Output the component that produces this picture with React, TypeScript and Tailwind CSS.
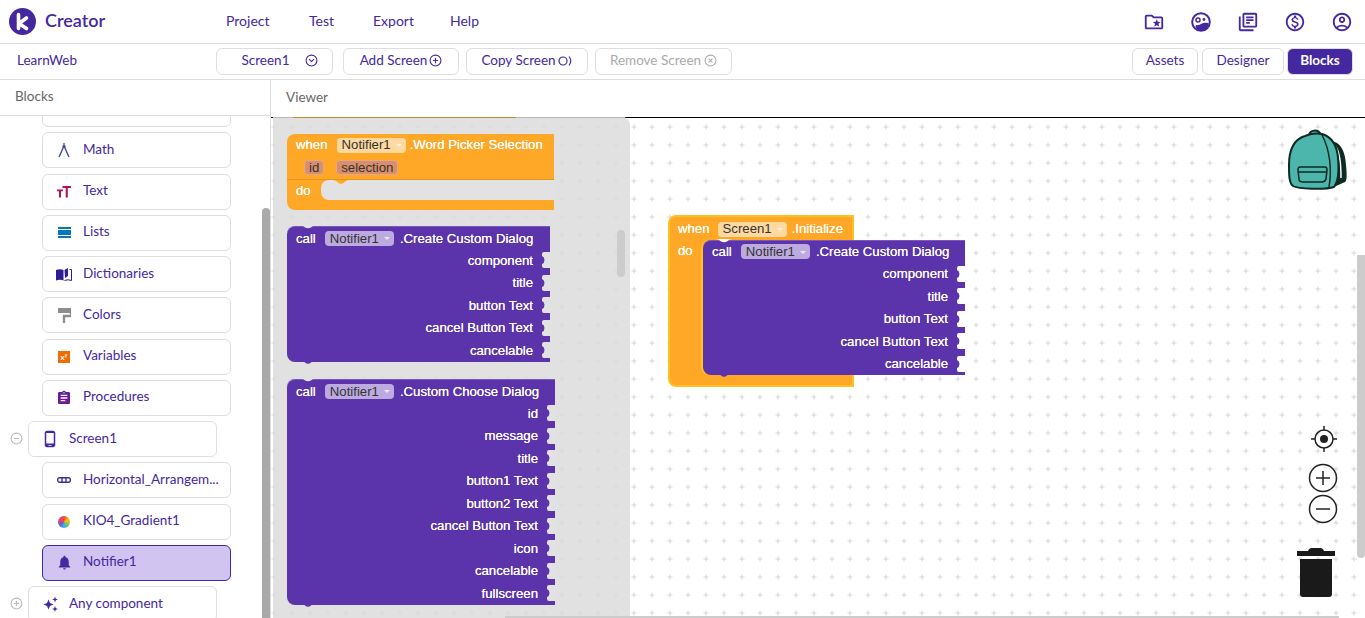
import { ReactNode } from "react";
import { CircleChevronDown, CircleMinus, CirclePlus, CircleX } from "lucide-react";
import {
  MdAssignment,
  MdNotifications,
  MdOutlineAccountCircle,
  MdOutlineFolderSpecial,
  MdOutlineLibraryBooks,
  MdOutlineMonetizationOn,
  MdOutlinePhoneAndroid,
} from "react-icons/md";

const blockFont = "font-['Liberation_Sans',Arial,sans-serif] text-[13.2px] leading-none text-white [text-shadow:0_0_0.6px_#fff]";

function Socket({ fill }: { fill: string }) {
  return (
    <svg width="9" height="16" viewBox="0 0 9 16" className="absolute right-0 top-[3px]">
      <path d="M9 0H3Q1 0 1 2V4Q3.5 5 3.5 8T1 12V14Q1 16 3 16H9Z" fill={fill} />
    </svg>
  );
}

function TopDent({ fill, className }: { fill: string; className: string }) {
  return (
    <svg width="16" height="4" viewBox="0 0 16 4" className={`absolute ${className}`}>
      <path d="M0 0Q3 0 5 2.5Q8 4 11 2.5Q13 0 16 0Z" fill={fill} />
    </svg>
  );
}

function BottomTab({ fill, className }: { fill: string; className: string }) {
  return (
    <svg width="16" height="5" viewBox="0 0 16 5" className={`absolute ${className}`}>
      <path d="M0 0Q3 0 5 2.5Q8 5 11 2.5Q13 0 16 0Z" fill={fill} />
    </svg>
  );
}

function Pill({ label, className }: { label: string; className: string }) {
  return (
    <span className={`flex h-[15px] items-center rounded-[4px] pl-[5px] font-normal text-[#333] [text-shadow:none] ${className}`}>
      {label}
      <span className="ml-[5px] mr-[4px] mt-[1px] h-0 w-0 border-x-[3px] border-t-[3px] border-x-transparent border-t-white/70" />
    </span>
  );
}

function CallBlock({ title, rows, fill, className }: { title: string; rows: string[]; fill: string; className: string }) {
  return (
    <div className={`absolute ${blockFont} ${className}`}>
      <div className="rounded-l-lg border-t border-[#7a58bd] bg-[#5b34ab]">
        <div className="flex h-[22.25px] items-center pl-[9px]">
          <span>call</span>
          <Pill label="Notifier1" className="ml-[9px] bg-[#bdabe0]" />
          <span className="ml-[6px]">{title}</span>
        </div>
        {rows.map((r) => (
          <div key={r} className="relative flex h-[22.5px] items-center justify-end pr-[17px]">
            {r}
            <Socket fill={fill} />
          </div>
        ))}
      </div>
      <TopDent fill={fill} className="left-[13px] -top-px" />
      <BottomTab fill="#5b34ab" className="left-[13px] -bottom-[3px]" />
    </div>
  );
}

function Side({ icon, label, active, top }: { icon: ReactNode; label: string; active?: boolean; top?: boolean }) {
  return (
    <div
      className={`flex h-[36px] w-[189px] shrink-0 items-center rounded-md border ${
        top ? "ml-[28px]" : "ml-[42px]"
      } ${active ? "border-[#4527a0] bg-[#d1c4f0]" : "border-[#dedede] bg-white"}`}
    >
      <span className="flex w-[40px] shrink-0 justify-center pl-[2px]">{icon}</span>
      <span className="-mt-[2.5px] truncate pr-[7px] text-[13.5px] text-[#4527a0]">{label}</span>
    </div>
  );
}

function ToolButton({ children, className }: { children: ReactNode; className: string }) {
  return (
    <div className={`flex h-[27px] items-center justify-center rounded-md border border-[#dedede] pb-[2px] text-[13.5px] ${className}`}>
      {children}
    </div>
  );
}

const createRows = ["component", "title", "button Text", "cancel Button Text", "cancelable"];
const chooseRows = ["id", "message", "title", "button1 Text", "button2 Text", "cancel Button Text", "icon", "cancelable", "fullscreen"];

export default function App() {
  return (
    <div className="flex h-[618px] w-[1365px] flex-col overflow-hidden bg-white font-[Lato,sans-serif] text-[#4527a0]">
      {/* top bar */}
      <div className="flex h-[44px] shrink-0 items-center border-b border-[#dddddd] pl-[9px] pr-[12px]">
        <svg width="27" height="27" viewBox="0 0 27 27">
          <circle cx="13.5" cy="13.5" r="13.5" fill="#4527a0" />
          <path d="M9.5 6.5V20.5M17.5 10L10 15.5L17.5 20.5" fill="none" stroke="#fff" strokeWidth="3.6" strokeLinecap="round" strokeLinejoin="round" />
        </svg>
        <span className="mb-[3px] ml-[9px] w-[181px] text-[18px] font-semibold">Creator</span>
        <span className="mb-[2px] w-[83px] text-[14px]">Project</span>
        <span className="mb-[2px] w-[64px] text-[14px]">Test</span>
        <span className="mb-[2px] w-[77px] text-[14px]">Export</span>
        <span className="mb-[2px] text-[14px]">Help</span>
        <div className="ml-auto flex items-center gap-[25px]">
          <MdOutlineFolderSpecial size={22} />
          <svg width="22" height="22" viewBox="0 0 22 22">
            <circle cx="11" cy="11" r="8.8" fill="none" stroke="#4527a0" strokeWidth="2" />
            <circle cx="8" cy="9" r="2" fill="none" stroke="#4527a0" strokeWidth="1.5" />
            <circle cx="14" cy="8.5" r="1.4" fill="#4527a0" />
            <path d="M6 14Q9 14.5 11 13Q14 11 18.5 12Q19 17 14 19.5Q8 20.5 5.5 16Z" fill="#4527a0" />
          </svg>
          <MdOutlineLibraryBooks size={22} />
          <MdOutlineMonetizationOn size={22} />
          <MdOutlineAccountCircle size={22} />
        </div>
      </div>

      {/* screen toolbar */}
      <div className="flex h-[36px] shrink-0 items-center border-b border-[#dddddd] pr-[12px]">
        <span className="mb-[2px] ml-[17px] w-[199px] text-[13.5px]">LearnWeb</span>
        <ToolButton className="w-[117px] gap-[15px] pl-[10px]">
          Screen1 <CircleChevronDown size={13} />
        </ToolButton>
        <ToolButton className="ml-[10px] w-[116px] gap-[2px]">
          Add Screen <CirclePlus size={13} />
        </ToolButton>
        <ToolButton className="ml-[7px] w-[122px] gap-[2px]">
          Copy Screen
          <svg width="15" height="12" viewBox="0 0 15 12">
            <circle cx="5" cy="6" r="4" fill="none" stroke="#4527a0" strokeWidth="1.2" />
            <path d="M11 1.5Q14.5 6 11 10.5" fill="none" stroke="#4527a0" strokeWidth="1.2" />
          </svg>
        </ToolButton>
        <ToolButton className="ml-[7px] w-[137px] gap-[3px] text-[#aaaaaa]">
          Remove Screen <CircleX size={13} />
        </ToolButton>
        <ToolButton className="ml-auto w-[66px]">Assets</ToolButton>
        <ToolButton className="ml-[4px] w-[82px]">Designer</ToolButton>
        <ToolButton className="ml-[3px] w-[66px] border-[#4527a0] bg-[#4527a0] font-bold text-white">Blocks</ToolButton>
      </div>

      <div className="flex min-h-0 flex-1">
        {/* blocks drawer */}
        <div className="flex w-[271px] shrink-0 flex-col border-r border-[#dddddd]">
          <div className="flex h-[36px] shrink-0 items-center border-b border-[#dddddd] pb-[3px] pl-[15px] text-[13.5px] text-[#666666]">Blocks</div>
          <div className="relative min-h-0 flex-1 overflow-hidden">
            <div className="-mt-[25px] flex flex-col gap-[5.25px]">
              <Side icon={<span className="h-[5px] w-[12px] bg-[#4caf50]" />} label="" />
              <Side
                icon={
                  <svg width="14" height="15" viewBox="0 0 14 15">
                    <path d="M7 3L2 14M7 3L12 14" fill="none" stroke="#3f4aa0" strokeWidth="1.4" />
                    <path d="M7 0V3" stroke="#3f4aa0" strokeWidth="1.2" />
                    <circle cx="7" cy="3.5" r="1.6" fill="#3f4aa0" />
                  </svg>
                }
                label="Math"
              />
              <Side
                icon={
                  <svg width="14" height="13" viewBox="0 0 14 13">
                    <path d="M0 4.5H6V6.2H4V12.5H2V6.2H0Z M5.5 1H14V3H10.8V12.5H8.7V3H5.5Z" fill="#ad1457" />
                  </svg>
                }
                label="Text"
              />
              <Side
                icon={
                  <span className="flex w-[13px] flex-col gap-px">
                    <span className="h-[2px] bg-[#0277bd]" />
                    <span className="h-[5px] bg-[#0277bd]" />
                    <span className="h-[2px] bg-[#0277bd]" />
                  </span>
                }
                label="Lists"
              />
              <Side
                icon={
                  <svg width="16" height="14" viewBox="0 0 16 14">
                    <path d="M0 3Q4 1.5 7.5 3V13.5Q4 12 0 13.5Z" fill="#311b92" />
                    <path d="M8.5 3Q10 2 12 1V9L9 11Z" fill="#311b92" />
                    <path d="M13.5 2.5H15.5V13.5Q12 12 8.5 13.5" fill="none" stroke="#311b92" strokeWidth="1" />
                  </svg>
                }
                label="Dictionaries"
              />
              <Side
                icon={
                  <svg width="13" height="15" viewBox="0 0 13 15">
                    <path d="M0 0H13V5H0Z" fill="#8e8e8e" />
                    <path d="M13 2.5V8H6V15" fill="none" stroke="#8e8e8e" strokeWidth="2.4" />
                  </svg>
                }
                label="Colors"
              />
              <Side
                icon={
                  <span className="flex h-[12px] w-[12px] items-start justify-center bg-[#ef6c00] pt-[2px] text-[8px] font-bold leading-none text-white">
                    x<span className="text-[5px]">y</span>
                  </span>
                }
                label="Variables"
              />
              <Side icon={<MdAssignment size={16} className="text-[#6a1b9a]" />} label="Procedures" />
              <Side icon={<MdOutlinePhoneAndroid size={18} />} label="Screen1" top />
              <Side
                icon={
                  <svg width="14" height="6" viewBox="0 0 14 6">
                    <rect x="0.7" y="0.7" width="12.6" height="4.6" rx="2" fill="none" stroke="#4527a0" strokeWidth="1.4" />
                    <path d="M5 1V5M9 1V5" stroke="#4527a0" strokeWidth="1.4" />
                  </svg>
                }
                label="Horizontal_Arrangem..."
              />
              <Side
                icon={<span className="h-[12px] w-[12px] rounded-full bg-[conic-gradient(#f44336,#ffc107,#8bc34a,#29b6f6,#7e57c2,#ec407a,#f44336)] blur-[0.6px]" />}
                label="KIO4_Gradient1"
              />
              <Side icon={<MdNotifications size={17} />} label="Notifier1" active />
              <Side
                icon={
                  <svg width="15" height="16" viewBox="0 0 15 16">
                    <path d="M5.5 3.5L7 7L10.5 8.5L7 10L5.5 13.5L4 10L0.5 8.5L4 7Z M12 0.5L12.8 2.7L15 3.5L12.8 4.3L12 6.5L11.2 4.3L9 3.5L11.2 2.7Z M12 10L12.8 12.2L15 13L12.8 13.8L12 16L11.2 13.8L9 13L11.2 12.2Z" fill="#4527a0" />
                  </svg>
                }
                label="Any component"
                top
              />
            </div>
            <CircleMinus size={13} className="absolute left-[10px] top-[316px] text-[#bbbbbb]" />
            <CirclePlus size={13} className="absolute left-[10px] top-[481px] text-[#bbbbbb]" />
            <div className="absolute right-0 top-[92px] bottom-0 w-[8px] rounded-t bg-[#a9a9a9]" />
          </div>
        </div>

        {/* viewer */}
        <div className="flex min-w-0 flex-1 flex-col">
          <div className="flex h-[37px] shrink-0 items-center pb-[3px] pl-[15px] text-[13.5px] text-[#666666]">Viewer</div>
          <div className="relative min-h-0 flex-1 overflow-hidden bg-white">
            <svg className="absolute inset-0 h-full w-full">
              <defs>
                <pattern id="dots" x="-6" y="1" width="18" height="18" patternUnits="userSpaceOnUse">
                  <path d="M6.5 9H11.5M9 6.5V11.5" stroke="#d6d6d6" strokeWidth="1" />
                </pattern>
              </defs>
              <rect width="100%" height="100%" fill="url(#dots)" />
            </svg>

            {/* top edge of the workspace */}
            <div className="absolute inset-x-0 top-0 h-px bg-black" />

            {/* flyout */}
            <div className="absolute left-[2px] top-0 bottom-0 w-[357px] rounded-tr-lg bg-[rgba(219,219,219,0.82)]" />
            <div className="absolute left-[2px] top-0 h-px w-[352px] bg-[#b8b8b8]" />
            <div className="absolute left-[22px] top-0 h-px w-[223px] bg-[#c98a2e]" />
            <div className="absolute right-[26px] bottom-0 left-[234px] h-[2px] bg-[#cccccc]" />
            <div className="absolute left-[346px] top-[113px] h-[47px] w-[8px] rounded bg-[#cccccc]" />

            <div className={`absolute left-[16px] top-[17px] w-[267px] rounded-l-lg bg-[#ffa726] ${blockFont}`}>
              <div className="flex h-[22px] items-center pl-[9px]">
                <span>when</span>
                <Pill label="Notifier1" className="ml-[9px] bg-[#ffd9a0]" />
                <span className="ml-[4px]">.Word Picker Selection</span>
              </div>
              <div className="flex h-[24px] items-center border-b border-[#e59420] pl-[17px] [text-shadow:none]">
                <span className="flex h-[15px] items-center rounded-[4px] border border-[#e3a888] bg-[#d98e6c] px-[4px] text-[#333]">id</span>
                <span className="ml-[12px] flex h-[15px] items-center rounded-[4px] border border-[#e3a888] bg-[#d98e6c] px-[4px] text-[#333]">selection</span>
              </div>
              <div className="relative flex h-[20px] items-center">
                <span className="w-[34px] pl-[9px] pt-px">do</span>
                <div className="h-full flex-1 rounded-l-lg bg-[#e2e2e2]" />
                <BottomTab fill="#ffa726" className="left-[46px] top-0" />
              </div>
              <div className="h-[10px] rounded-bl-lg" />
            </div>

            <CallBlock title=".Create Custom Dialog" rows={createRows} fill="#e2e2e2" className="left-[16px] top-[109px] w-[263px]" />
            <CallBlock title=".Custom Choose Dialog" rows={chooseRows} fill="#e2e2e2" className="left-[16px] top-[262px] w-[268px]" />

            {/* the blocks placed on the workspace */}
            <div className={`absolute left-[397px] top-[98px] h-[172px] w-[186px] rounded-l-lg border-2 border-[#ffc022] bg-[#ffa726] ${blockFont}`}>
              <div className="flex h-[24px] items-center pl-[8px]">
                <span>when</span>
                <Pill label="Screen1" className="ml-[8px] bg-[#ffd9a0]" />
                <span className="ml-[5px]">.Initialize</span>
              </div>
              <div className="pl-[8px] pt-[3px]">do</div>
            </div>
            <CallBlock title=".Create Custom Dialog" rows={createRows} fill="#ffffff" className="left-[432px] top-[122.5px] w-[262px] rounded-l-lg shadow-[-2px_0_0_#ffc022]" />

            {/* workspace controls */}
            <div className="absolute right-0 top-[138px] h-[303px] w-[8px] rounded-b bg-[#cccccc]" />
            <svg className="absolute left-[1014px] top-[10px]" width="66" height="66" viewBox="1285 127 66 66">
              <path d="M1331 141C1340 142 1345 150 1346 165C1347 175 1347 181 1345 182L1336 186Z" fill="#0d2b22" />
              <path d="M1335 146C1339 150 1341 160 1341 178" fill="none" stroke="#fff" strokeWidth="1.5" />
              <path d="M1309 136C1309 130 1318 128 1321 135" fill="#4db6ac" stroke="#0d2b22" strokeWidth="2" />
              <path
                d="M1305 136C1292 140 1289 152 1289 165C1289 175 1289 183 1293 186C1298 189 1325 190 1334 187C1338 182 1339 170 1338 158C1337 146 1332 137 1322 134C1316 133 1310 134 1305 136Z"
                fill="#4db6ac"
                stroke="#0d2b22"
                strokeWidth="2"
              />
              <path d="M1322 135C1330 150 1332 170 1329 187" fill="none" stroke="#0d2b22" strokeWidth="1.5" />
              <path d="M1300 167H1325Q1327 167 1327 170L1326 179Q1325 182 1322 182H1303Q1299 182 1299 179L1298 170Q1298 167 1300 167ZM1298 172H1327" fill="#4db6ac" stroke="#0d2b22" strokeWidth="1.6" />
            </svg>
            <svg className="absolute left-[1039px] top-[308px]" width="28" height="28" viewBox="0 0 28 28">
              <circle cx="14" cy="14" r="9" fill="none" stroke="#222" strokeWidth="1.5" />
              <circle cx="14" cy="14" r="4" fill="#222" />
              <path d="M14 1V5M14 23V27M1 14H5M23 14H27" stroke="#222" strokeWidth="1.5" />
            </svg>
            <svg className="absolute left-[1037px] top-[346px]" width="30" height="30" viewBox="0 0 30 30">
              <circle cx="15" cy="15" r="13.5" fill="#fff" stroke="#222" strokeWidth="1.5" />
              <path d="M8 15H22M15 8V22" stroke="#222" strokeWidth="1.5" />
            </svg>
            <svg className="absolute left-[1037px] top-[377px]" width="30" height="30" viewBox="0 0 30 30">
              <circle cx="15" cy="15" r="13.5" fill="#fff" stroke="#222" strokeWidth="1.5" />
              <path d="M8 15H22" stroke="#222" strokeWidth="1.5" />
            </svg>
            <svg className="absolute left-[1026px] top-[431px]" width="38" height="50" viewBox="0 0 38 50">
              <path d="M0 3H11Q12 0 15 0H23Q26 0 27 3H38V8H0Z" fill="#1a1a1a" />
              <path d="M3 11H35V46Q35 49 32 49H6Q3 49 3 46Z" fill="#1a1a1a" />
            </svg>
          </div>
        </div>
      </div>
    </div>
  );
}
